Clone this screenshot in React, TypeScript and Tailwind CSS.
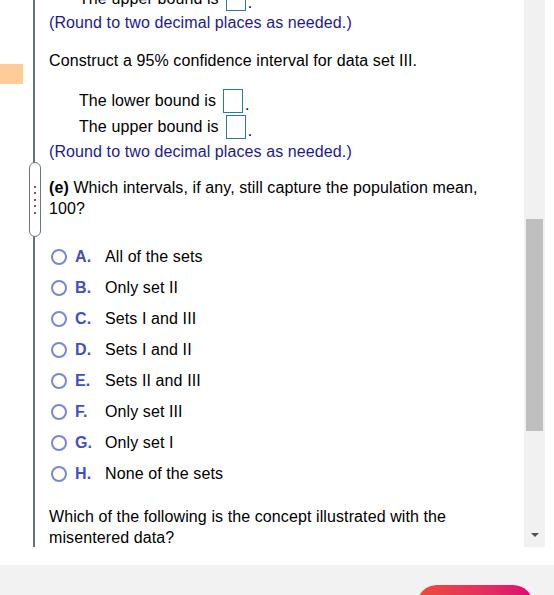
import React from "react";

const options = [
  { key: "A", text: "All of the sets" },
  { key: "B", text: "Only set II" },
  { key: "C", text: "Sets I and III" },
  { key: "D", text: "Sets I and II" },
  { key: "E", text: "Sets II and III" },
  { key: "F", text: "Only set III" },
  { key: "G", text: "Only set I" },
  { key: "H", text: "None of the sets" },
];

function AnswerBox() {
  return (
    <span className="inline-flex items-end">
      <span className="inline-block w-[20px] h-[24px] border border-[#2a7b9b] bg-white ml-[7px]" />
      <span className="ml-[2px] leading-none">.</span>
    </span>
  );
}

function BoundRow({ label }: { label: string }) {
  return (
    <div className="h-[26px] flex items-center pl-[30px]">
      <span>{label}</span>
      <AnswerBox />
    </div>
  );
}

export default function App() {
  return (
    <div
      className="w-[554px] h-[595px] bg-white overflow-hidden text-[16px] tracking-[0.1px] text-black"
      style={{ fontFamily: '"Liberation Sans", Arial, sans-serif' }}
    >
      {/* Scrolled question area */}
      <div className="relative h-[547px] flex overflow-hidden">
        {/* Left gutter */}
        <div className="w-[33px] shrink-0">
          <div className="mt-[64px] w-[23px] h-[20px] bg-[#ffcc99]" />
        </div>
        <div className="w-[2px] shrink-0 bg-[#66717c]" />
        <div className="w-[14px] shrink-0" />

        {/* Drag handle */}
        <div className="absolute left-[29px] top-[162px] w-[12px] h-[75px] rounded-full border border-[#6b7680] bg-white flex flex-col items-center justify-center gap-[4.5px]">
          {[0, 1, 2, 3, 4].map((i) => (
            <span key={i} className="block w-[2px] h-[2px] bg-[#9c4a4a]" />
          ))}
        </div>

        {/* Content */}
        <div className="w-[452px] shrink-0 -mt-[14px]">
          <BoundRow label="The upper bound is" />
          <p className="leading-[21px] text-[#1d1a8f]">(Round to two decimal places as needed.)</p>
          <p className="leading-[21px] mt-[17px]">Construct a 95% confidence interval for data set III.</p>
          <div className="mt-[17px]">
            <BoundRow label="The lower bound is" />
            <BoundRow label="The upper bound is" />
          </div>
          <p className="leading-[21px] mt-[1px] text-[#1d1a8f]">(Round to two decimal places as needed.)</p>
          <p className="leading-[21px] mt-[15px]">
            <span className="font-bold">(e)</span> Which intervals, if any, still capture the population mean,
            100?
          </p>
          <div className="mt-[22px]">
            {options.map((o) => (
              <div key={o.key} className="h-[31px] flex items-center">
                <span className="ml-[2px] w-[16px] h-[16px] rounded-full border-2 border-[#7a87d4] bg-white shrink-0" />
                <span className="ml-[8px] w-[30px] font-bold text-[#3f4fc4]">{o.key}.</span>
                <span>{o.text}</span>
              </div>
            ))}
          </div>
          <p className="leading-[21px] mt-[17px]">
            Which of the following is the concept illustrated with the misentered data?
          </p>
        </div>

        <div className="flex-1" />

        {/* Scrollbar */}
        <div className="w-[21px] shrink-0 bg-[#f1f1f1] flex flex-col items-center mr-[9px]">
          <div className="mt-[219px] w-[17px] h-[212px] bg-[#bfbfbf]" />
          <div className="flex-1" />
          <svg width="10" height="6" viewBox="0 0 10 6" className="mb-[9px]">
            <path d="M1 1 L9 1 L5 5 Z" fill="#505050" />
          </svg>
        </div>
      </div>

      {/* Footer */}
      <div className="h-[18px] bg-white" />
      <div className="h-[30px] bg-[#f2f2f2] flex justify-end pr-[21px]">
        <div className="mt-[20px] w-[116px] h-[40px] rounded-full bg-gradient-to-r from-[#ee4a35] to-[#de0073]" />
      </div>
    </div>
  );
}
